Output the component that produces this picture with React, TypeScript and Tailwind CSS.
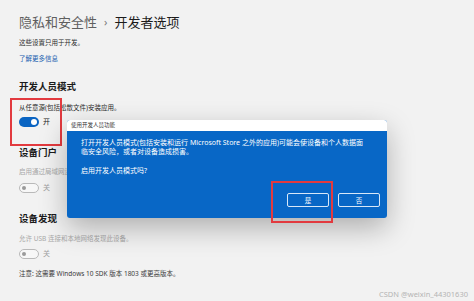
import React from "react";

const FONT = { fontFamily: '"Noto Sans", "Noto Sans CJK SC", sans-serif' };

function ToggleOn() {
  return (
    <div className="relative h-[10px] w-[20px] rounded-full bg-[#0a64c2]">
      <div className="absolute right-[2px] top-[2px] h-[6px] w-[6px] rounded-full bg-white" />
    </div>
  );
}

function ToggleOff() {
  return (
    <div className="relative h-[10px] w-[20px] rounded-full border border-[#b9b9b9] bg-[#f7f7f7]">
      <div className="absolute left-[2px] top-[2px] h-[4px] w-[4px] rounded-full bg-[#9a9a9a]" />
    </div>
  );
}

export default function App() {
  return (
    <div className="relative h-[301px] w-[474px] overflow-hidden bg-[#f2f2f2]" style={FONT}>
      <div className="flex flex-col pl-[19px] pt-[14px]">
        <div className="flex items-center text-[13px] leading-[16px] whitespace-nowrap">
          <span className="text-[#5f5f5f]">隐私和安全性</span>
          <span className="mx-[7px] text-[11px] text-[#7a7a7a]">›</span>
          <span className="text-[#1b1b1b]">开发者选项</span>
        </div>
        <div className="mt-[8px] text-[6.5px] leading-[10px] text-[#2a2a2a]">这些设置只用于开发。</div>
        <div className="mt-[6px] text-[6.5px] leading-[10px] text-[#1a5fb0]">了解更多信息</div>

        <div className="mt-[17px] text-[9.5px] font-semibold leading-[12px] text-[#1b1b1b]">开发人员模式</div>
        <div className="mt-[10px] text-[6.5px] leading-[10px] text-[#2a2a2a]">从任意源(包括松散文件)安装应用。</div>
        <div className="mt-[4px] flex items-center gap-[4px]">
          <ToggleOn />
          <span className="text-[7px] leading-[10px] text-[#222]">开</span>
        </div>

        <div className="mt-[20px] text-[9.5px] font-semibold leading-[12px] text-[#1b1b1b]">设备门户</div>
        <div className="mt-[8px] w-[48px] overflow-hidden whitespace-nowrap text-[6.5px] leading-[10px] text-[#a8a8a8]">启用通过局域网连接进行远程诊断。</div>
        <div className="mt-[6px] flex items-center gap-[4px]">
          <ToggleOff />
          <span className="text-[7px] leading-[10px] text-[#a0a0a0]">关</span>
        </div>

        <div className="mt-[20px] text-[9.5px] font-semibold leading-[12px] text-[#1b1b1b]">设备发现</div>
        <div className="mt-[9px] text-[6.5px] leading-[10px] text-[#a8a8a8]">允许 USB 连接和本地网络发现此设备。</div>
        <div className="mt-[5px] flex items-center gap-[4px]">
          <ToggleOff />
          <span className="text-[7px] leading-[10px] text-[#a0a0a0]">关</span>
        </div>
        <div className="mt-[10px] text-[6.5px] leading-[10px] text-[#3a3a3a]">
          注意: 这需要 Windows 10 SDK 版本 1803 或更高版本。
        </div>
      </div>

      {/* annotation around toggle */}
      <div className="absolute left-[10px] top-[98px] h-[48px] w-[52px] border-2 border-[#e23a3f]" />

      {/* dialog */}
      <div className="absolute left-[67px] top-[120px] flex h-[98px] w-[320px] flex-col overflow-hidden rounded-[3px] bg-[#0867c6] shadow-[0_10px_28px_rgba(0,0,0,0.28)]">
        <div className="flex h-[11px] items-center bg-white pl-[4px] text-[5.5px] text-[#333]">使用开发人员功能</div>
        <div className="flex flex-1 flex-col pl-[14px] pt-[7px] text-[7px] leading-[9px] text-white">
          <div className="whitespace-nowrap">打开开发人员模式(包括安装和运行 Microsoft Store 之外的应用)可能会使设备和个人数据面</div>
          <div className="whitespace-nowrap">临安全风险，或者对设备造成损害。</div>
          <div className="mt-[10px] whitespace-nowrap">启用开发人员模式吗?</div>
          <div className="mt-auto flex justify-end gap-[9px] pb-[11px] pr-[7px]">
            <div className="flex h-[14px] w-[42px] items-center justify-center rounded-[2px] border border-[#d8e8f8] text-[6.5px]">是</div>
            <div className="flex h-[14px] w-[42px] items-center justify-center rounded-[2px] border border-[#d8e8f8] text-[6.5px]">否</div>
          </div>
        </div>
      </div>

      {/* annotation around yes button */}
      <div className="absolute left-[271px] top-[181px] h-[42px] w-[62px] border-2 border-[#e23a3f]" />

      <div className="absolute right-[6px] top-[289px] text-[7.5px] leading-[10px] text-[#b4b4b4]">CSDN @weixin_44301630</div>
    </div>
  );
}
